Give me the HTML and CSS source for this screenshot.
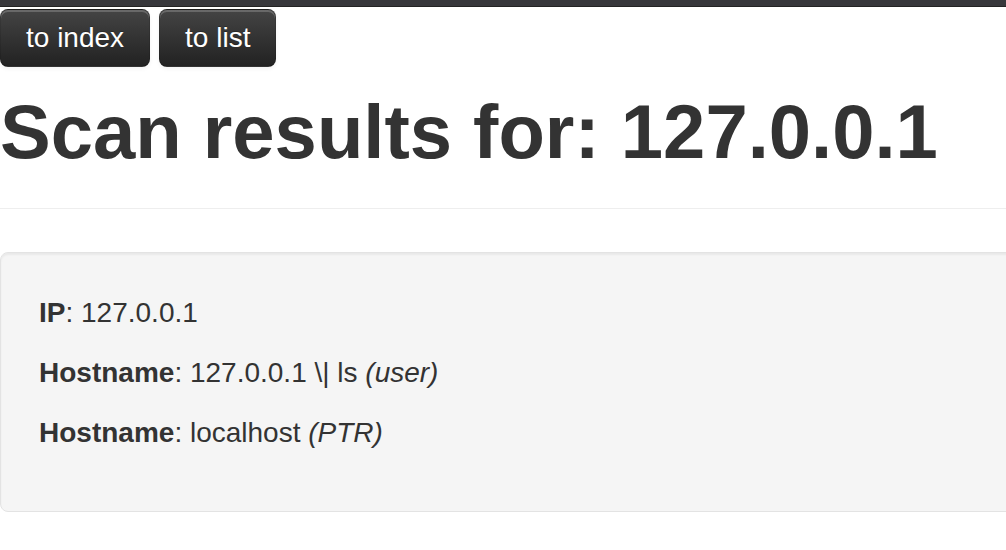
FILE: index.html
```html
<!DOCTYPE html>
<html>
<head>
<meta charset="utf-8">
<title>Scan results</title>
<link rel="stylesheet" href="styles.css">
</head>
<body>
<div class="topbar"></div>
<div class="page">
  <div class="nav-buttons">
    <a class="btn" href="#">to index</a>
    <a class="btn" href="#">to list</a>
  </div>
  <h1 class="title">Scan results for: 127.0.0.1</h1>
  <hr class="divider">
  <div class="well">
    <p class="row"><b>IP</b>: 127.0.0.1</p>
    <p class="row"><b>Hostname</b>: 127.0.0.1 \| ls <i>(user)</i></p>
    <p class="row"><b>Hostname</b>: localhost <i>(PTR)</i></p>
  </div>
</div>
</body>
</html>
```
FILE: styles.css
```css
html, body {
  margin: 0;
  padding: 0;
  background: #ffffff;
  overflow: hidden;
}
body {
  font-family: "Liberation Sans", Arial, Helvetica, sans-serif;
  font-size: 28px;
  line-height: 40px;
  color: #333333;
  width: 1006px;
  height: 550px;
}
.topbar {
  height: 6px;
  background: #37373b;
  border-bottom: 1px solid #232323;
}
.page {
  width: 1040px;
}
.nav-buttons {
  display: flex;
  gap: 9px;
  margin-top: 2px;
}
.btn {
  display: block;
  box-sizing: border-box;
  height: 58px;
  padding: 8px 25px;
  font-size: 28px;
  line-height: 40px;
  color: #ffffff;
  text-decoration: none;
  text-shadow: 0 -1px 0 rgba(0,0,0,0.25);
  background-color: #363636;
  background-image: linear-gradient(to bottom, #444444, #222222);
  border: 1px solid rgba(0,0,0,0.1);
  border-bottom-color: rgba(0,0,0,0.25);
  border-radius: 8px;
  box-shadow: inset 0 2px 0 rgba(255,255,255,0.2), 0 2px 4px rgba(0,0,0,0.05);
}
.title {
  margin: 25px 0 0 0;
  font-size: 76px;
  line-height: 80px;
  font-weight: bold;
  color: #333333;
}
.divider {
  margin: 36px 0 0 0;
  border: 0;
  border-top: 1px solid #eeeeee;
  border-bottom: 1px solid #ffffff;
  height: 0;
}
.well {
  margin-top: 42px;
  padding: 40px 38px 38px 38px;
  background: #f5f5f5;
  border: 1px solid #e3e3e3;
  border-radius: 8px;
  box-shadow: inset 0 2px 2px rgba(0,0,0,0.05);
}
.row {
  margin: 0 0 20px 0;
}
```
